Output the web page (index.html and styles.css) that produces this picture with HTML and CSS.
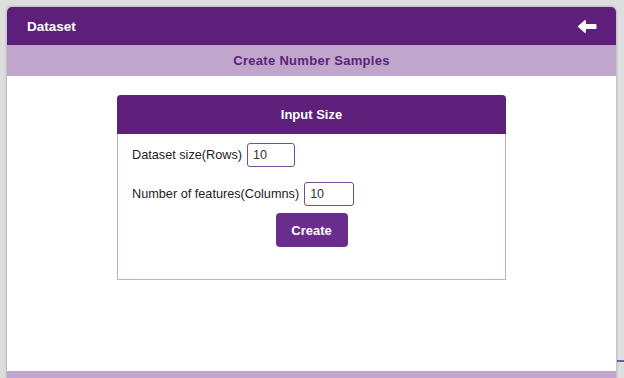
FILE: index.html
```html
<!DOCTYPE html>
<html lang="en">
<head>
    <meta charset="UTF-8">
    <meta name="viewport" content="width=device-width, initial-scale=1.0">
    <title>Dataset - Create Number Samples</title>
    <link rel="stylesheet" href="styles.css">
</head>
<body>
    <div class="panel">
        <div class="panel-header">
            <h2>Dataset</h2>
            <button class="back-button" title="Back">
                <svg width="20" height="15" viewBox="0 0 20 15">
                    <path d="M0.5 7.5 L8.5 0.5 L9 5 L18.5 5 Q19.5 5 19.5 6 L19.5 9 Q19.5 10 18.5 10 L9 10 L8.5 14.5 Z" fill="#ffffff"/>
                </svg>
            </button>
        </div>

        <div class="panel-subheader">Create Number Samples</div>

        <div class="panel-body">
            <div class="input-card">
                <div class="input-card-header">Input Size</div>
                <div class="input-card-body">
                    <div class="form-row">
                        <label for="rows">Dataset size(Rows)</label>
                        <input type="text" id="rows" class="num-input" value="10">
                    </div>
                    <div class="form-row">
                        <label for="cols">Number of features(Columns)</label>
                        <input type="text" id="cols" class="num-input" value="10">
                    </div>
                    <button class="btn-create">Create</button>
                </div>
            </div>
        </div>

        <div class="panel-footer"></div>
    </div>

    <div class="side-mark"></div>
</body>
</html>
```

FILE: styles.css
```css
body {
    font-family: "Liberation Sans", Arial, sans-serif;
    background-color: #dedede;
    margin: 0;
    padding: 7px 8px 0 7px;
    height: 378px;
    box-sizing: border-box;
    overflow: hidden;
}
.panel {
    width: 609px;
    background-color: white;
    border-radius: 5px 5px 0 0;
    box-shadow: 0 0 3px rgba(0, 0, 0, 0.35);
    overflow: hidden;
}
.panel-header {
    background-color: #5e1f7b;
    height: 38px;
    display: flex;
    align-items: center;
    justify-content: space-between;
    padding: 0 19px 0 20px;
}
.panel-header h2 {
    margin: 0;
    color: white;
    font-size: 13.5px;
    font-weight: bold;
}
.back-button {
    background: none;
    border: none;
    padding: 0;
    display: flex;
    cursor: pointer;
}
.panel-subheader {
    background-color: #c0a5cc;
    height: 31px;
    line-height: 31px;
    text-align: center;
    color: #5e1f7b;
    font-size: 13px;
    font-weight: bold;
    letter-spacing: 0.3px;
}
.panel-body {
    height: 295px;
    padding-top: 19px;
    box-sizing: border-box;
}
.input-card {
    width: 389px;
    margin-left: 110px;
    border: 1px solid #c7a9d5;
    border-top: none;
    border-radius: 4px 4px 0 0;
    box-sizing: border-box;
    height: 185px;
}
.input-card-header {
    background-color: #5e1f7b;
    color: white;
    font-size: 13px;
    font-weight: bold;
    text-align: center;
    height: 39px;
    line-height: 39px;
    border-radius: 4px 4px 0 0;
    margin: 0 -1px;
}
.input-card-body {
    padding: 9px 14px 0;
    display: flex;
    flex-direction: column;
}
.form-row {
    display: flex;
    align-items: center;
    gap: 5px;
    margin-bottom: 15px;
}
.form-row label {
    font-size: 12.7px;
    color: #222;
}
.num-input {
    width: 48px;
    height: 24px;
    box-sizing: border-box;
    border: 1px solid #7b4a93;
    border-radius: 3px;
    padding: 0 5px;
    font-family: inherit;
    font-size: 12.5px;
    color: #333;
}
.form-row:nth-child(2) {
    margin-bottom: 7px;
}
.form-row:nth-child(2) .num-input {
    width: 50px;
}
.btn-create {
    align-self: center;
    width: 72px;
    height: 34px;
    background-color: #6a2d8c;
    color: white;
    border: none;
    border-radius: 4px;
    font-family: inherit;
    font-size: 13px;
    font-weight: bold;
    cursor: pointer;
}
.panel-footer {
    background-color: #c0a5cc;
    height: 20px;
}
.side-mark {
    position: absolute;
    left: 617px;
    top: 360px;
    width: 7px;
    height: 2px;
    background-color: #7d5a90;
}
```
